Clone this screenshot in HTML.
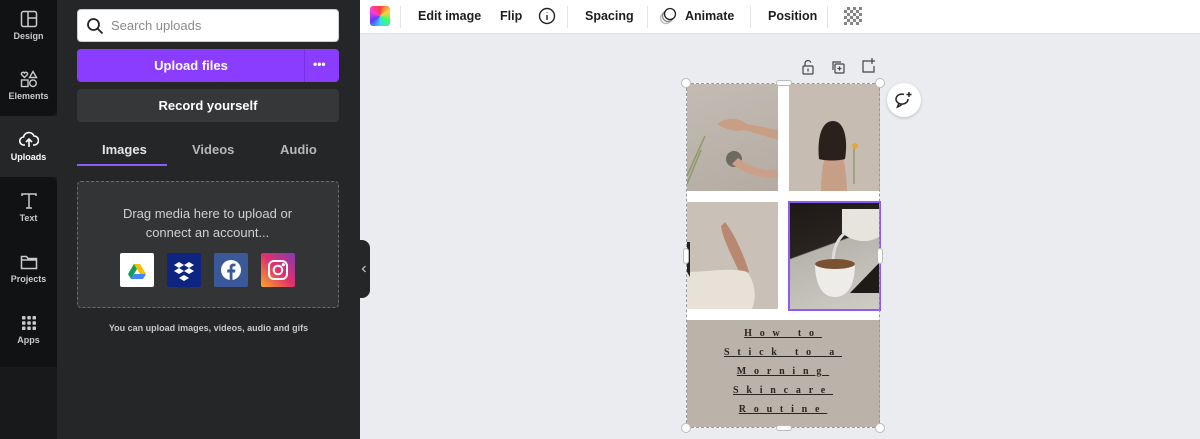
<!DOCTYPE html>
<html><head><meta charset="utf-8">
<style>
*{box-sizing:border-box;margin:0;padding:0}
body{width:1200px;height:439px;overflow:hidden;font-family:"Liberation Sans",sans-serif;background:#ebecf0;position:relative}
.rail{position:absolute;left:0;top:0;width:57px;height:439px;background:#18191b}
.ri{position:absolute;left:0;width:57px;text-align:center;color:#c9cacc;font-size:9px;font-weight:bold}
.ri svg{display:block;margin:0 auto 3px}
.panel{position:absolute;left:57px;top:0;width:303px;height:439px;background:#252627}
.abs{position:absolute}
.tb{position:absolute;top:0;left:360px;width:840px;height:34px;background:#fff;border-bottom:1px solid #e3e3e6;font-size:12.5px;font-weight:bold;color:#1d1d1f}
.tb span{position:absolute;top:9px}
.sep{position:absolute;top:6px;width:1px;height:22px;background:#e5e5e8}
.h{position:absolute;width:10px;height:10px;border-radius:50%;background:#fff;border:1px solid #bbb}
.u{position:absolute;left:0;width:194px;text-align:center;font-family:"Liberation Serif",serif;font-weight:bold;font-size:10px;letter-spacing:7.8px;text-decoration:underline;color:#2a2622}
</style></head><body>
<div class="rail">
 <div class="abs" style="left:0;top:0;width:57px;height:116px;background:#111213;border-radius:0 0 8px 0"></div>
 <div class="abs" style="left:0;top:116px;width:57px;height:61px;background:#252627"></div>
 <div class="abs" style="left:0;top:177px;width:57px;height:190px;background:#111213;border-radius:0 8px 0 0"></div>
 <div class="ri" style="top:10px"><svg width="18" height="18" viewBox="0 0 18 18" fill="none" stroke="#c9cacc" stroke-width="1.5"><rect x="1.5" y="1.5" width="15" height="15" rx="2"/><path d="M8 1.5v15M8 8h8.5"/></svg>Design</div>
 <div class="ri" style="top:70px"><svg width="18" height="18" viewBox="0 0 18 18" fill="none" stroke="#c9cacc" stroke-width="1.4"><path d="M4.5 7.5L1.5 4.5a1.7 1.7 0 013-1.5 1.7 1.7 0 013 1.5z"/><path d="M13 1.5l3.5 6h-7z"/><rect x="1.5" y="10" width="6.5" height="6.5"/><circle cx="13" cy="13.2" r="3.3"/></svg>Elements</div>
 <div class="ri" style="top:131px;color:#fff"><svg width="20" height="18" viewBox="0 0 20 18" fill="none" stroke="#fff" stroke-width="1.6"><path d="M6 14H5a4 4 0 01-.5-8A5.5 5.5 0 0115 5a4.5 4.5 0 010 9h-1"/><path d="M10 16V8M7 11l3-3 3 3"/></svg>Uploads</div>
 <div class="ri" style="top:192px"><svg width="18" height="18" viewBox="0 0 18 18" fill="none" stroke="#c9cacc" stroke-width="1.5"><path d="M2 4V2h14v2M9 2v14M6 16h6"/></svg>Text</div>
 <div class="ri" style="top:253px"><svg width="18" height="18" viewBox="0 0 18 18" fill="none" stroke="#c9cacc" stroke-width="1.5"><path d="M1.5 3.5h5l1.5 2h8.5v10h-15z M1.5 7h15"/></svg>Projects</div>
 <div class="ri" style="top:314px"><svg width="18" height="18" viewBox="0 0 18 18" fill="#c9cacc"><rect x="2" y="2" width="3.5" height="3.5" rx=".8"/><rect x="7.3" y="2" width="3.5" height="3.5" rx=".8"/><rect x="12.5" y="2" width="3.5" height="3.5" rx=".8"/><rect x="2" y="7.3" width="3.5" height="3.5" rx=".8"/><rect x="7.3" y="7.3" width="3.5" height="3.5" rx=".8"/><rect x="12.5" y="7.3" width="3.5" height="3.5" rx=".8"/><rect x="2" y="12.5" width="3.5" height="3.5" rx=".8"/><rect x="7.3" y="12.5" width="3.5" height="3.5" rx=".8"/><rect x="12.5" y="12.5" width="3.5" height="3.5" rx=".8"/></svg>Apps</div>
</div>
<div class="panel">
 <div class="abs" style="left:20px;top:9px;width:262px;height:33px;background:#fff;border-radius:4px;border:1px solid #ccc">
  <svg class="abs" style="left:8px;top:7px" width="18" height="18" viewBox="0 0 18 18" fill="none" stroke="#222" stroke-width="1.8"><circle cx="7.5" cy="7.5" r="5.5"/><path d="M11.5 11.5l5 5"/></svg>
  <span class="abs" style="left:33px;top:8px;font-size:13px;color:#8a8a8f">Search uploads</span></div>
 <div class="abs" style="left:20px;top:49px;width:262px;height:33px;background:#8b3dff;border-radius:4px;color:#fff;font-size:13px;font-weight:bold">
  <span class="abs" style="left:0;width:228px;text-align:center;top:9px">Upload files</span>
  <div class="abs" style="left:227px;top:0;width:1px;height:33px;background:#7a2fe6"></div>
  <span class="abs" style="left:236px;top:8px;font-size:12px;letter-spacing:0">•••</span></div>
 <div class="abs" style="left:20px;top:89px;width:262px;height:33px;background:#363738;border-radius:4px;color:#fff;font-size:13px;font-weight:bold;text-align:center;line-height:33px">Record yourself</div>
 <span class="abs" style="left:45px;top:142px;font-size:13px;font-weight:bold;color:#e5e5e7">Images</span>
 <span class="abs" style="left:135px;top:142px;font-size:13px;font-weight:bold;color:#b8b8bb">Videos</span>
 <span class="abs" style="left:223px;top:142px;font-size:13px;font-weight:bold;color:#b8b8bb">Audio</span>
 <div class="abs" style="left:20px;top:164px;width:90px;height:2px;background:#8b5cf6"></div>
 <div class="abs" style="left:20px;top:181px;width:262px;height:127px;background:#333436;border:1.5px dashed #6a6b6e;border-radius:4px">
  <div class="abs" style="left:0;top:22px;width:259px;text-align:center;font-size:13px;line-height:19px;color:#d0d0d3">Drag media here to upload or<br>connect an account...</div>
  <div class="abs" style="left:42px;top:71px;width:34px;height:34px;background:#fff;border-radius:2px"><svg width="34" height="34" viewBox="0 0 34 34"><path d="M14 11h6l6 10h-6z" fill="#fbbc04"/><path d="M14 11l-6 10 3 5 6-10z" fill="#0f9d58"/><path d="M11 26h12l3-5H14z" fill="#4285f4"/></svg></div>
  <div class="abs" style="left:89px;top:71px;width:34px;height:34px;background:#0d2481;border-radius:2px"><svg width="34" height="34" viewBox="0 0 34 34" fill="#fff"><path d="M12 9l5 3-5 3-5-3zM22 9l5 3-5 3-5-3zM12 15l5 3-5 3-5-3zM22 15l5 3-5 3-5-3zM17 22l5 3-5 3-5-3z"/></svg></div>
  <div class="abs" style="left:136px;top:71px;width:34px;height:34px;background:#3b5998;border-radius:2px"><svg width="34" height="34" viewBox="0 0 34 34"><circle cx="17" cy="17" r="10" fill="#fff"/><path d="M18.5 27v-7.5h2.5l.4-3h-2.9v-1.8c0-.9.3-1.4 1.5-1.4h1.5v-2.6c-.4 0-1.3-.1-2.2-.1-2.2 0-3.6 1.3-3.6 3.7v2.2h-2.5v3h2.5V27z" fill="#3b5998"/></svg></div>
  <div class="abs" style="left:183px;top:71px;width:34px;height:34px;border-radius:2px;background:linear-gradient(45deg,#f9a825,#e1306c 50%,#833ab4)"><svg width="34" height="34" viewBox="0 0 34 34" fill="none" stroke="#fff" stroke-width="2"><rect x="8" y="8" width="18" height="18" rx="5"/><circle cx="17" cy="17" r="4.3"/><circle cx="22.3" cy="11.7" r=".6" fill="#fff"/></svg></div>
 </div>
 <div class="abs" style="left:0;top:323px;width:303px;text-align:center;font-size:9px;font-weight:bold;color:#c8c8cb">You can upload images, videos, audio and gifs</div>
</div>
<div class="abs" style="left:358px;top:240px;width:12px;height:58px;background:#252627;border-radius:0 8px 8px 0"><svg style="position:absolute;left:3px;top:25px" width="6" height="8" viewBox="0 0 6 8" fill="none" stroke="#ccc" stroke-width="1.2"><path d="M4.5 1L1.5 4l3 3"/></svg></div>
<div class="tb">
 <div class="abs" style="left:10px;top:6px;width:20px;height:20px;border-radius:3px;background:conic-gradient(from 0deg,#ff3b3b,#ffd23b,#3bff6a,#3bd6ff,#5b3bff,#ff3bd6,#ff3b3b)"></div>
 <div class="sep" style="left:40px"></div>
 <span style="left:58px">Edit image</span><span style="left:140px">Flip</span>
 <svg class="abs" style="left:178px;top:7px" width="18" height="18" viewBox="0 0 18 18" fill="none" stroke="#222" stroke-width="1.4"><circle cx="9" cy="9" r="7.5"/><path d="M9 8v5M9 5v.5"/></svg>
 <div class="sep" style="left:207px"></div>
 <span style="left:225px">Spacing</span>
 <div class="sep" style="left:287px"></div>
 <svg class="abs" style="left:299px;top:6px" width="20" height="20" viewBox="0 0 20 20" fill="none" stroke-width="1.3"><circle cx="7" cy="12" r="5.5" stroke="#bbb"/><circle cx="9" cy="10" r="5.5" stroke="#888"/><circle cx="11" cy="8" r="5.5" stroke="#222" fill="#fff"/></svg>
 <span style="left:325px">Animate</span>
 <div class="sep" style="left:390px"></div>
 <span style="left:408px">Position</span>
 <div class="sep" style="left:467px"></div>
 <div class="abs" style="left:484px;top:7px;width:18px;height:18px;background:repeating-conic-gradient(#333 0 25%,#eee 0 50%) 0 0/6px 6px;opacity:.6"></div>
</div>
<svg class="abs" style="left:800px;top:59px" width="16" height="16" viewBox="0 0 16 16" fill="none" stroke="#444" stroke-width="1.2"><rect x="3" y="7" width="10" height="8" rx="1"/><path d="M5 7V4.5a3 3 0 015.8-1M8 9.5v3"/></svg>
<svg class="abs" style="left:830px;top:59px" width="16" height="16" viewBox="0 0 16 16" fill="none" stroke="#444" stroke-width="1.2"><rect x="5" y="5" width="9" height="9" rx="1"/><path d="M3 11V3h8M9.5 7.5v4M7.5 9.5h4"/></svg>
<svg class="abs" style="left:860px;top:57px" width="16" height="16" viewBox="0 0 16 16" fill="none" stroke="#444" stroke-width="1.2"><path d="M9 4H3v11h11V9M12 1v6M9 4h6"/></svg>
<div class="abs" style="left:887px;top:83px;width:34px;height:34px;border-radius:50%;background:#fff;box-shadow:0 1px 3px rgba(0,0,0,.2)"><svg style="position:absolute;left:7px;top:8px" width="20" height="18" viewBox="0 0 20 18" fill="none" stroke="#222" stroke-width="1.5"><path d="M14 8a6 5 0 11-4-4.6M5 12l-1.5 4 4-2"/><path d="M15 1v5M12.5 3.5h5"/></svg></div>
<div class="abs" style="left:686px;top:83px;width:194px;height:345px;background:#fff">
 <div class="abs" style="left:1px;top:1px;width:91px;height:107px;background:linear-gradient(160deg,#c4bcb4,#b4aba2)">
  <svg width="91" height="107" viewBox="0 0 91 107"><path d="M30 40c8-6 20-8 30 0l31 6v10l-34-10c-8 2-18 0-27-6z" fill="#c89f84"/><circle cx="47" cy="75" r="8" fill="#6e6a62"/><path d="M45 80c10 8 28 15 46 14v-8c-16 2-28-4-40-12z" fill="#caa08a"/><path d="M0 92l18-40M0 100l14-34" stroke="#8a9a6a" stroke-width="1.5"/></svg></div>
 <div class="abs" style="left:103px;top:1px;width:91px;height:107px;background:#c6bcb2">
  <svg width="91" height="107" viewBox="0 0 91 107"><path d="M32 107c0-25 5-45 12-50 8 2 13 20 14 50z" fill="#c79f87"/><path d="M30 75c-2-20 2-38 14-38 12 0 15 20 12 38-6 2-20 2-26 0z" fill="#2b211c"/><path d="M65 100V60" stroke="#7a8a5a"/><circle cx="66" cy="62" r="3" fill="#e2a93a"/></svg></div>
 <div class="abs" style="left:1px;top:119px;width:91px;height:107px;background:#c9c1b8">
  <svg width="91" height="107" viewBox="0 0 91 107"><path d="M38 20c8 10 18 30 24 50l-8 4c-8-18-18-36-20-50z" fill="#b88870"/><path d="M0 70c20 0 45-5 60 0 8 10 10 25 5 37H0z" fill="#e7e1d8"/><path d="M0 40v30l3 5V40z" fill="#222"/></svg></div>
 <div class="abs" style="left:102px;top:118px;width:93px;height:110px;border:2px solid #8b5cf6;background:linear-gradient(160deg,#1d1816 0,#2a2420 40%,#b7b3ad 41%,#cfccc6)">
  <svg width="89" height="106" viewBox="0 0 89 106"><path d="M52 6h37v28c-10 6-25 6-37-4z" fill="#e7e4dd"/><path d="M55 30c-10 8-12 20-12 30" stroke="#ddd" stroke-width="3" fill="none"/><path d="M25 60h40c0 20-6 34-20 34S25 80 25 60z" fill="#eeece8"/><ellipse cx="45" cy="61" rx="20" ry="5" fill="#7a5232"/><path d="M60 90l29-30v30z" fill="#1e1a18"/></svg></div>
 <div class="abs" style="left:1px;top:237px;width:193px;height:107px;background:#bbb2aa"></div>
 <div class="u" style="top:245px">How to</div>
 <div class="u" style="top:264px">Stick to a</div>
 <div class="u" style="top:283px">Morning</div>
 <div class="u" style="top:302px">Skincare</div>
 <div class="u" style="top:321px">Routine</div>
 <div class="abs" style="left:0;top:0;width:194px;height:345px;border:1.5px dashed #999"></div>
</div>
<div class="h" style="left:681px;top:78px"></div><div class="h" style="left:875px;top:78px"></div>
<div class="h" style="left:681px;top:423px"></div><div class="h" style="left:875px;top:423px"></div>
<div class="abs" style="left:776px;top:80px;width:16px;height:6px;border-radius:3px;background:#fff;border:1px solid #bbb"></div>
<div class="abs" style="left:776px;top:425px;width:16px;height:6px;border-radius:3px;background:#fff;border:1px solid #bbb"></div>
<div class="abs" style="left:683px;top:248px;width:6px;height:16px;border-radius:3px;background:#fff;border:1px solid #bbb"></div>
<div class="abs" style="left:877px;top:248px;width:6px;height:16px;border-radius:3px;background:#fff;border:1px solid #bbb"></div>
</body></html>
